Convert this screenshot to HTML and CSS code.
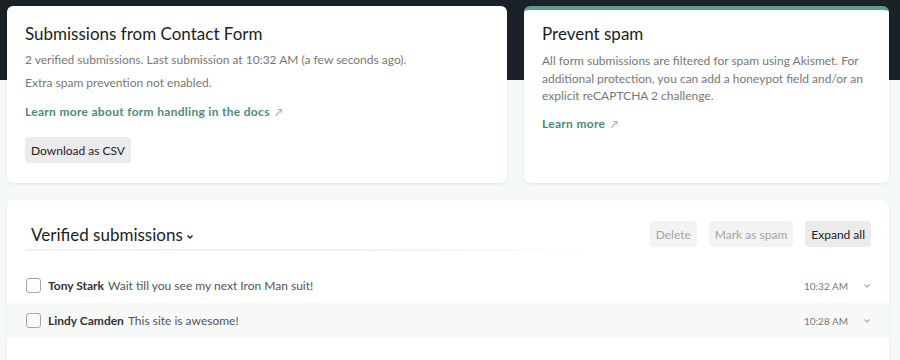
FILE: index.html
```html
<!DOCTYPE html>
<html lang="en">
<head>
    <meta charset="UTF-8">
    <meta name="viewport" content="width=device-width, initial-scale=1.0">
    <title>Form submissions</title>
    <link rel="stylesheet" href="styles.css">
</head>
<body>

    <div class="top-cards">
        <div class="card">
            <h2>Submissions from Contact Form</h2>
            <p class="muted">2 verified submissions. Last submission at 10:32 AM (a few seconds ago).</p>
            <p class="muted">Extra spam prevention not enabled.</p>
            <a class="doc-link" href="#">Learn more about form handling in the docs <span class="arrow">&#8599;</span></a>
            <div><button class="btn">Download as CSV</button></div>
        </div>

        <div class="card card-accent">
            <h2>Prevent spam</h2>
            <p class="muted tight">All form submissions are filtered for spam using Akismet. For additional protection, you can add a honeypot field and/or an explicit reCAPTCHA 2 challenge.</p>
            <a class="doc-link" href="#">Learn more <span class="arrow">&#8599;</span></a>
        </div>
    </div>

    <div class="card list-card">
        <div class="list-header">
            <h3 class="list-title">Verified submissions<svg class="caret" width="8" height="6" viewBox="0 0 8 6"><path d="M1.5 1.5 L4 4 L6.5 1.5" fill="none" stroke="#222" stroke-width="1.5"/></svg></h3>
            <div class="actions">
                <button class="btn btn-disabled">Delete</button>
                <button class="btn btn-disabled">Mark as spam</button>
                <button class="btn">Expand all</button>
            </div>
        </div>

        <ul class="submissions">
            <li class="row">
                <span class="check"></span>
                <span class="name">Tony Stark</span>
                <span class="msg">Wait till you see my next Iron Man suit!</span>
                <span class="time">10:32 AM</span>
                <svg class="chev" width="8" height="6" viewBox="0 0 8 6"><path d="M1.5 1.5 L4 4 L6.5 1.5" fill="none" stroke="#aaa" stroke-width="1.2"/></svg>
            </li>
            <li class="row row-alt">
                <span class="check"></span>
                <span class="name">Lindy Camden</span>
                <span class="msg">This site is awesome!</span>
                <span class="time">10:28 AM</span>
                <svg class="chev" width="8" height="6" viewBox="0 0 8 6"><path d="M1.5 1.5 L4 4 L6.5 1.5" fill="none" stroke="#aaa" stroke-width="1.2"/></svg>
            </li>
        </ul>
    </div>

</body>
</html>
```

FILE: styles.css
```css
body {
    font-family: Lato, Arial, sans-serif;
    font-size: 12px;
    line-height: 16px;
    color: #222;
    margin: 0;
    padding: 6px 11px 0 7px;
    background: linear-gradient(#1b2129 0, #1b2129 80px, #f5f8f8 80px);
    height: 360px;
    box-sizing: border-box;
    overflow: hidden;
}
.top-cards {
    display: grid;
    grid-template-columns: 500px 365px;
    gap: 17px;
    margin-bottom: 17px;
}
.card {
    background: white;
    border-radius: 6px;
    box-shadow: 0 1px 3px rgba(0, 0, 0, 0.08);
    padding: 17px 18px 0;
    box-sizing: border-box;
    height: 177px;
}
.card-accent {
    border-top: 4px solid #5c9d8e;
    padding-top: 13px;
}
h2 {
    font-size: 17px;
    line-height: 22px;
    font-weight: 400;
    margin: 0 0 7px;
    color: #1c1c1c;
}
.muted {
    color: #777;
    margin: 0 0 7px;
}
.muted.tight {
    line-height: 17.7px;
    margin-bottom: 11px;
}
.doc-link {
    display: inline-block;
    color: #4d8a7b;
    font-weight: 700;
    letter-spacing: 0.3px;
    text-decoration: none;
    margin: 6px 0 17px;
}
.card-accent .doc-link {
    margin-top: 0;
}
.arrow {
    font-weight: 400;
    color: #999;
    font-size: 10px;
    margin-left: 2px;
}
.btn {
    font-family: inherit;
    font-size: 12px;
    background: #ebebeb;
    color: #222;
    border: none;
    border-radius: 4px;
    padding: 0 6px;
    height: 26px;
}
.btn-disabled {
    background: #f3f3f3;
    color: #a5a5a5;
}
.list-card {
    height: auto;
    padding: 21px 0 20px;
    min-height: 170px;
}
.list-header {
    display: flex;
    justify-content: space-between;
    align-items: flex-start;
    padding: 0 18px;
}
.list-title {
    font-size: 17px;
    line-height: 22px;
    font-weight: 400;
    margin: 0;
    padding: 3px 6px 5px;
    width: 575px;
    background: linear-gradient(to right, #eef1f1 55%, rgba(238, 241, 241, 0)) bottom / 100% 2px no-repeat;
}
.caret {
    margin-left: 3px;
    vertical-align: middle;
}
.actions {
    display: flex;
    gap: 12px;
}
.submissions {
    list-style: none;
    margin: 17px 0 0;
    padding: 0;
}
.row {
    display: flex;
    align-items: center;
    height: 35px;
    padding: 0 18px 0 19px;
}
.row-alt {
    background: #f7f9f9;
}
.check {
    width: 13px;
    height: 13px;
    border: 1px solid #a5a5a5;
    border-radius: 3px;
    margin-right: 7px;
}
.name {
    font-weight: 700;
    color: #333;
    margin-right: 4px;
}
.msg {
    color: #555;
    flex: 1;
}
.time {
    font-size: 10px;
    color: #777;
    margin-right: 15px;
}
```
